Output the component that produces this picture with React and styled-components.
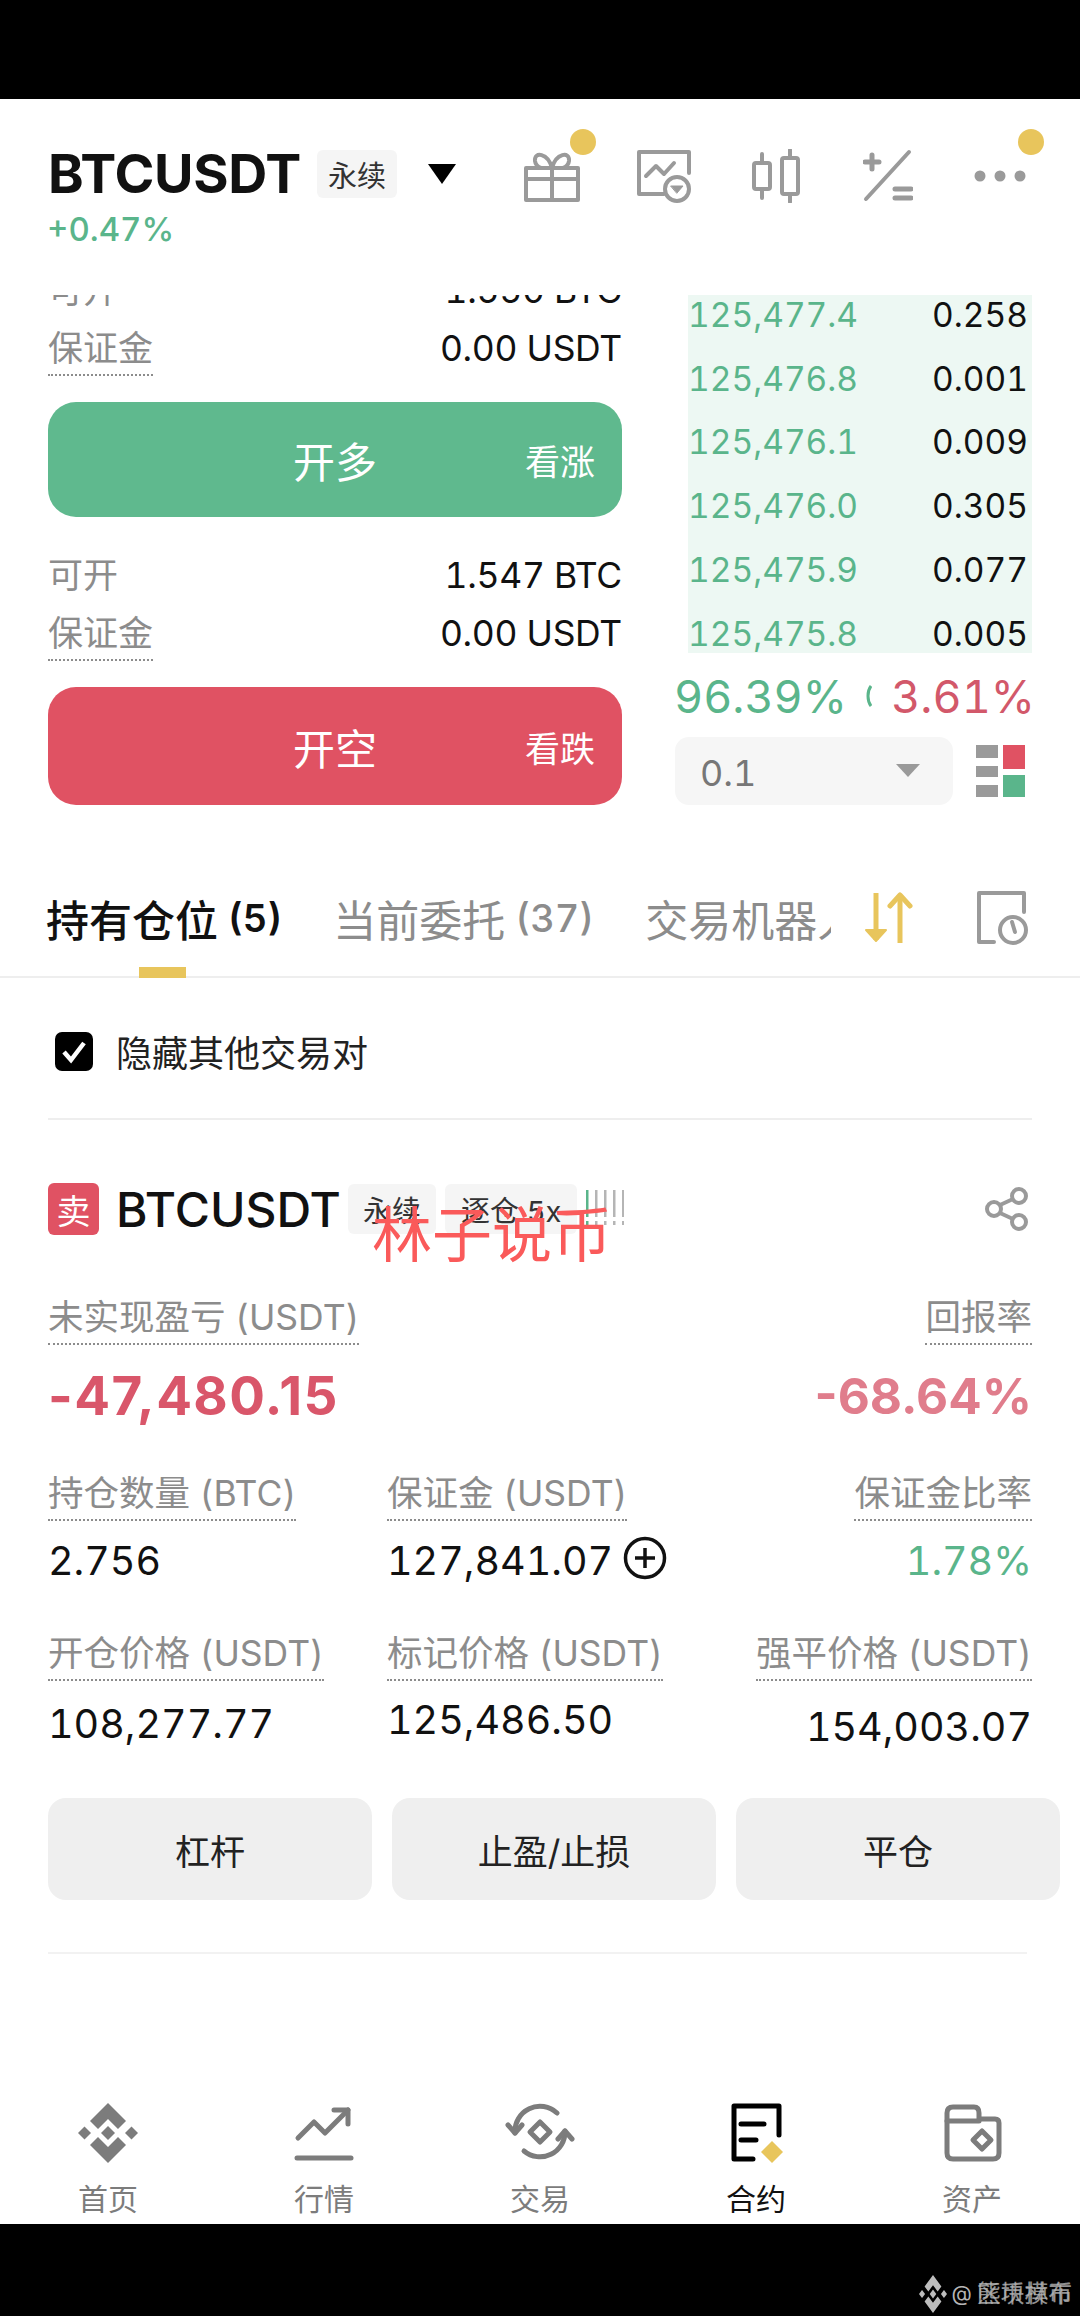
import React from "react";
import styled, { createGlobalStyle } from "styled-components";

const green = "#5ab58b";
const red = "#e05263";
const grey = "#8c8c8c";
const iconGrey = "#9a9a9a";
const navGrey = "#7c7c7c";
const yellow = "#e8c55c";

const GlobalStyle = createGlobalStyle`
  html, body {
    margin: 0;
    padding: 0;
    background: #000;
  }
  * {
    box-sizing: border-box;
  }
  body {
    font-family: Inter, "Noto Sans CJK SC", sans-serif;
    font-variant-numeric: tabular-nums;
    color: #111;
  }
`;

const Page = styled.div`
  width: 1080px;
  height: 2316px;
  display: flex;
  flex-direction: column;
  background: #000;
  overflow: hidden;
`;

const TopBar = styled.div`
  height: 99px;
  flex: none;
`;

const Screen = styled.div`
  height: 2125px;
  flex: none;
  background: #fff;
  display: flex;
  flex-direction: column;
`;

const Header = styled.div`
  height: 196px;
  flex: none;
  display: flex;
  justify-content: space-between;
  padding: 49px 24px 0 48px;
`;

const TitleRow = styled.div`
  display: flex;
  align-items: center;
  height: 52px;
`;

const Title = styled.div`
  font-size: 54px;
  font-weight: 700;
  letter-spacing: -0.3px;
  line-height: 52px;
`;

const Tag = styled.div`
  background: #f5f5f5;
  border-radius: 6px;
  height: ${(p) => p.$h || 48}px;
  padding: 0 ${(p) => p.$pad || 11}px;
  display: flex;
  align-items: center;
  font-size: 29px;
  color: #333;
  white-space: nowrap;
`;

const TitleTag = styled(Tag)`
  margin-left: 16px;
`;

const TitleCaret = styled.div`
  margin-left: 31px;
  width: 0;
  height: 0;
  border-left: 14px solid transparent;
  border-right: 14px solid transparent;
  border-top: 20px solid #000;
`;

const Change = styled.div`
  margin-top: 9px;
  font-size: 33px;
  font-weight: 500;
  line-height: 40px;
  margin-left: -1px;
  color: ${green};
`;

const HeaderIcons = styled.div`
  display: flex;
  margin-top: 2px;
`;

const IconCell = styled.div`
  position: relative;
  width: 112px;
  height: 52px;
  display: flex;
  align-items: center;
  justify-content: center;
`;

const Dot = styled.span`
  position: absolute;
  top: -21px;
  left: 74px;
  width: 26px;
  height: 26px;
  border-radius: 50%;
  background: ${yellow};
`;

const TradePanel = styled.div`
  height: 565px;
  flex: none;
  overflow: hidden;
  display: flex;
  justify-content: space-between;
  padding: 0 48px;
`;

const TradeLeft = styled.div`
  width: 574px;
  margin-top: -34px;
`;

const InfoRow = styled.div`
  height: 58px;
  display: flex;
  align-items: center;
  justify-content: space-between;
  font-size: 35.5px;
  letter-spacing: -0.3px;
`;

const InfoLabel = styled.span`
  color: ${grey};
  font-size: 35px;
  letter-spacing: 0;
  line-height: 52px;
  ${(p) => p.$dotted && `border-bottom: 2px dotted #8c8c8c; margin-top: 2px;`}
`;

const TradeButton = styled.div`
  position: relative;
  height: ${(p) => p.$h}px;
  margin: 25px 0 29px;
  border-radius: 28px;
  background: ${(p) => p.$bg};
  color: #fff;
  display: flex;
  align-items: center;
  justify-content: center;
  font-size: 42px;
`;

const ButtonHint = styled.span`
  position: absolute;
  right: 27px;
  font-size: 35px;
`;

const TradeRight = styled.div`
  width: 357px;
`;

const BookClip = styled.div`
  height: 358px;
  margin-left: 13px;
  background: #edf8f3;
  overflow: hidden;
`;

const BookInner = styled.div`
  margin-top: -12px;
`;

const BookRow = styled.div`
  height: 63.8px;
  display: flex;
  align-items: center;
  justify-content: space-between;
  padding-right: 4px;
  font-size: 33.5px;
`;

const BookPrice = styled.span`
  color: ${green};
  font-size: 33.5px;
`;

const RatioRow = styled.div`
  height: 60px;
  margin: 13px -3px 0 -1px;
  display: flex;
  align-items: center;
  justify-content: space-between;
  font-size: 45px;
`;

const RatioValue = styled.span`
  color: ${(p) => p.$color};
`;

const ControlRow = styled.div`
  margin-top: 11px;
  display: flex;
  align-items: center;
  justify-content: space-between;
  padding-right: 7px;
`;

const StepSelect = styled.div`
  width: 278px;
  height: 68px;
  border-radius: 14px;
  background: #f6f6f6;
  display: flex;
  align-items: center;
  justify-content: space-between;
  padding: 4px 33px 0 25px;
  font-size: 36px;
  color: #777;
`;

const SelectCaret = styled.span`
  width: 0;
  height: 0;
  margin-top: -6px;
  border-left: 12px solid transparent;
  border-right: 12px solid transparent;
  border-top: 13px solid #9a9a9a;
`;

const Tabs = styled.div`
  height: 118px;
  flex: none;
  display: flex;
  align-items: center;
  padding: 0 52px 0 46px;
  border-bottom: 2px solid #eeeeee;
`;

const Tab = styled.div`
  position: relative;
  height: 100%;
  flex: none;
  display: flex;
  align-items: center;
  margin-right: 51px;
  font-size: 43px;
  white-space: nowrap;
  color: ${(p) => (p.$active ? "#111" : grey)};
  font-weight: ${(p) => (p.$active ? 500 : 400)};

  ${(p) =>
    p.$active &&
    `&::after {
      content: "";
      position: absolute;
      left: 50%;
      bottom: -2px;
      width: 47px;
      height: 11px;
      margin-left: -25px;
      background: ${yellow};
    }`}
`;

const TabCount = styled.span`
  font-size: 38px;
  margin-left: 10px;
  font-weight: ${(p) => (p.$active ? 600 : 500)};
`;

const ClippedTab = styled(Tab)`
  width: 186px;
  margin-right: 33px;
  overflow: hidden;
`;

const TabIcons = styled.div`
  display: flex;
  flex: none;
  align-items: center;
  gap: 63px;
`;

const HideRow = styled.div`
  height: 142px;
  margin: 0 48px;
  flex: none;
  padding: 6px 0 0 7px;
  display: flex;
  align-items: center;
  gap: 23px;
  border-bottom: 2px solid #eeeeee;
  font-size: 36px;
  color: #222;
`;

const Position = styled.div`
  padding: 63px 48px 0;
  display: flex;
  flex-direction: column;
`;

const PositionHead = styled.div`
  position: relative;
  height: 52px;
  display: flex;
  align-items: center;
`;

const SideBadge = styled.div`
  width: 51px;
  height: 52px;
  border-radius: 6px;
  background: ${red};
  color: #fff;
  font-size: 34px;
  display: flex;
  align-items: center;
  justify-content: center;
`;

const PositionName = styled.div`
  margin-left: 17px;
  font-size: 48px;
  font-weight: 500;
`;

const HeadTags = styled.div`
  margin-left: 7px;
  display: flex;
  align-items: center;
  gap: 9px;
`;

const Share = styled.div`
  margin-left: auto;
  margin-right: 4px;
  display: flex;
`;

const Stamp = styled.div`
  position: absolute;
  left: 324px;
  top: 18px;
  font-size: 60px;
  line-height: 68px;
  color: #fa5a5a;
  white-space: nowrap;
`;

const Metrics = styled.div`
  margin-top: 60px;
  display: grid;
  grid-template-columns: 339px 1fr auto;
  row-gap: 45px;
`;

const Cell = styled.div`
  display: flex;
  flex-direction: column;
  align-items: ${(p) => (p.$right ? "flex-end" : "flex-start")};
  ${(p) => p.$col && `grid-column: ${p.$col};`}
`;

const MetricLabel = styled.span`
  font-size: 35.5px;
  line-height: 46px;
  padding-bottom: 2px;
  color: ${grey};
  border-bottom: 2px dotted #8c8c8c;
  white-space: nowrap;
`;

const BigValue = styled.div`
  margin-top: 21px;
  font-size: ${(p) => p.$size}px;
  line-height: 60px;
  font-weight: 700;
  font-variant-numeric: proportional-nums;
  letter-spacing: ${(p) => p.$spacing || 0}px;
  color: ${(p) => p.$color};
`;

const MetricValue = styled.div`
  margin-top: ${(p) => p.$top || 15}px;
  font-size: 39.5px;
  line-height: 50px;
  color: ${(p) => p.$color || "#111"};
  display: flex;
  align-items: center;
  gap: 10px;
`;

const PlusWrap = styled.span`
  display: flex;
  margin-top: -6px;
`;

const Actions = styled.div`
  margin-top: 46px;
  width: 1012px;
  flex: none;
  display: grid;
  grid-template-columns: repeat(3, 324px);
  gap: 20px;
`;

const ActionButton = styled.div`
  height: 102px;
  border-radius: 18px;
  background: #efefef;
  color: #222;
  font-size: 35px;
  display: flex;
  align-items: center;
  justify-content: center;
`;

const EndLine = styled.div`
  height: 2px;
  margin: 52px 5px 0 0;
  background: #f2f2f2;
`;

const Nav = styled.div`
  margin-top: auto;
  padding-bottom: 5px;
  display: grid;
  grid-template-columns: repeat(5, 216px);
`;

const NavItem = styled.div`
  display: flex;
  flex-direction: column;
  align-items: center;
  gap: 16px;
  font-size: 30px;
  line-height: 40px;
  color: ${(p) => (p.$active ? "#111" : navGrey)};
`;

const NavIconBox = styled.div`
  height: 60px;
  display: flex;
  justify-content: center;
`;

const BottomBar = styled.div`
  flex: 1;
  display: flex;
  align-items: flex-end;
  justify-content: flex-end;
  padding: 0 8px 3px 0;
  color: #b5b5b5;
`;

const Credit = styled.div`
  display: flex;
  align-items: center;
  gap: 5px;
  font-size: 24px;
  line-height: 38px;
`;

const CreditAt = styled.span`
  font-size: 21px;
`;

const CreditStack = styled.div`
  display: grid;
  letter-spacing: -0.2px;
  > span {
    grid-area: 1 / 1;
    opacity: 0.8;
  }
`;

const GiftIcon = () => (
  <svg width="56" height="54" viewBox="0 0 56 54" fill="none" stroke={iconGrey} strokeWidth="4" strokeLinejoin="round">
    <path d="M2 19H54V51H2Z" />
    <path d="M2 30H54M28 19V51" />
    <path d="M28 19C24 4 10 2 11 12C11.500 16 14 18 17 19M28 19C32 4 46 2 45 12C44.500 16 42 18 39 19" />
  </svg>
);

const ChartIcon = () => (
  <svg width="56" height="54" viewBox="0 0 56 54" fill="none" stroke={iconGrey} strokeWidth="4" strokeLinecap="round" strokeLinejoin="round">
    <path d="M28 45H3V3H53V24" />
    <path d="M10 27L20 17L28 25L38 14" />
    <circle cx="41" cy="40" r="12" />
    <path d="M35 37H47L41 44Z" fill={iconGrey} strokeWidth="1" />
  </svg>
);

const CandleIcon = () => (
  <svg width="48" height="54" viewBox="0 0 48 54" fill="none" stroke={iconGrey} strokeWidth="4" strokeLinecap="round" strokeLinejoin="round">
    <rect x="2" y="14" width="16" height="26" rx="2" />
    <path d="M10 5V14M10 40V49" />
    <rect x="30" y="9" width="16" height="36" rx="2" />
    <path d="M38 1V9M38 45V53" />
  </svg>
);

const PlusMinusIcon = () => (
  <svg width="50" height="54" viewBox="0 0 50 54" fill="none" stroke={iconGrey} strokeWidth="4" strokeLinecap="round">
    <path d="M2 13H16M9 6V20" strokeWidth="5" />
    <path d="M3 50L46 3" />
    <path d="M32 40H48M32 49H48" strokeWidth="5" />
  </svg>
);

const DotsIcon = () => (
  <svg width="52" height="12" viewBox="0 0 52 12" fill={iconGrey}>
    <circle cx="6" cy="6" r="5.500" />
    <circle cx="26" cy="6" r="5.500" />
    <circle cx="46" cy="6" r="5.500" />
  </svg>
);

const RatioArc = () => (
  <svg width="6" height="22" viewBox="0 0 6 22" fill="none" stroke={green} strokeWidth="3">
    <path d="M5 1C1 6 1 16 5 21" />
  </svg>
);

const DepthIcon = () => (
  <svg width="49" height="52" viewBox="0 0 49 52">
    <rect x="0" y="0" width="22" height="13" fill="#9a9a9a" />
    <rect x="0" y="21" width="22" height="11" fill="#9a9a9a" />
    <rect x="0" y="40" width="22" height="12" fill="#9a9a9a" />
    <rect x="27" y="0" width="22" height="24" fill={red} />
    <rect x="27" y="30" width="22" height="22" fill={green} />
  </svg>
);

const SortIcon = () => (
  <svg width="49" height="52" viewBox="0 0 49 52" fill="none" stroke={yellow} strokeWidth="5" strokeLinejoin="round">
    <path d="M12 1V48" />
    <path d="M2 38L12 49L22 38Z" fill={yellow} strokeWidth="2" />
    <path d="M36 51V4" />
    <path d="M26 14L36 3L46 14" strokeLinecap="round" />
  </svg>
);

const HistoryIcon = () => (
  <svg width="52" height="56" viewBox="0 0 52 56" fill="none" stroke={iconGrey} strokeWidth="4" strokeLinecap="round" strokeLinejoin="round">
    <path d="M18 52H3V3H48V22" />
    <circle cx="37" cy="40" r="13" />
    <path d="M36 32L39 42" />
  </svg>
);

const CheckBox = () => (
  <svg width="38" height="39" viewBox="0 0 38 39">
    <rect width="38" height="39" rx="7" fill="#000" />
    <path d="M9 20L16 28L29 11" fill="none" stroke="#fff" strokeWidth="4.500" />
  </svg>
);

const ShareIcon = () => (
  <svg width="43" height="44" viewBox="0 0 43 44" fill="none" stroke={iconGrey} strokeWidth="4">
    <circle cx="9" cy="22" r="7" />
    <circle cx="34" cy="9" r="7" />
    <circle cx="34" cy="35" r="7" />
    <path d="M15 18L28 12M15 26L28 32" />
  </svg>
);

const MarginBars = () => (
  <svg width="38" height="38" viewBox="0 0 38 38">
    {[0, 1, 2, 3, 4].map((i) => (
      <g key={i} fill={i === 0 ? green : "#b5b5b5"}>
        <rect x={i * 9} y="0" width="2.500" height="27" />
        <rect x={i * 9} y="31" width="2.500" height="4" />
      </g>
    ))}
  </svg>
);

const PlusCircle = () => (
  <svg width="44" height="44" viewBox="0 0 44 44" fill="none" stroke="#111" strokeWidth="3.500">
    <circle cx="22" cy="22" r="19.500" />
    <path d="M12 22H32M22 12V32" />
  </svg>
);

const BinanceMark = ({ width, height, fill }) => (
  <svg width={width} height={height} viewBox="0 0 60 60" fill={fill} preserveAspectRatio="none">
    <path d="M30 0L48 18L40 26L30 16L20 26L12 18Z" />
    <path d="M30 60L48 42L40 34L30 44L20 34L12 42Z" />
    <path d="M6.500 23.500L13 30L6.500 36.500L0 30Z" />
    <path d="M53.500 23.500L60 30L53.500 36.500L47 30Z" />
    <path d="M30 23L37 30L30 37L23 30Z" />
  </svg>
);

const MarketsIcon = () => (
  <svg width="60" height="60" viewBox="0 0 60 60" fill="none" stroke={navGrey} strokeWidth="5" strokeLinecap="round" strokeLinejoin="round">
    <path d="M4 35L20 19L31 30L54 7" />
    <path d="M40 7H54V21" />
    <path d="M3 55H57" />
  </svg>
);

const TradeIcon = () => (
  <svg width="70" height="60" viewBox="0 0 70 60" fill="none" stroke={navGrey} strokeWidth="5" strokeLinecap="round" strokeLinejoin="round">
    <path d="M10 30A25 25 0 0 1 52 10" />
    <path d="M3 22L10 30L17 22" />
    <path d="M60 28A25 25 0 0 1 19 48" />
    <path d="M53 36L60 28L67 36" />
    <path d="M35 19L45 29L35 39L25 29Z" />
  </svg>
);

const FuturesIcon = () => (
  <svg width="60" height="60" viewBox="0 0 60 60" fill="none" stroke="#000" strokeWidth="5" strokeLinecap="round" strokeLinejoin="round">
    <path d="M53 32V3H8V56H27" />
    <path d="M15 21H38M15 37H30" />
    <path d="M46 38L57 49L46 60L35 49Z" fill={yellow} stroke="none" />
  </svg>
);

const AssetsIcon = () => (
  <svg width="60" height="60" viewBox="0 0 60 60" fill="none" stroke={navGrey} strokeWidth="5" strokeLinecap="round" strokeLinejoin="round">
    <path d="M5 20V10Q5 4 11 4H32Q37 4 37 10V16H53Q57 16 57 20V50Q57 56 51 56H11Q5 56 5 50Z" />
    <path d="M5 18H37" />
    <path d="M40 28L49 37L40 46L31 37Z" />
  </svg>
);

const orderRows = [
  ["125,477.4", "0.258"],
  ["125,476.8", "0.001"],
  ["125,476.1", "0.009"],
  ["125,476.0", "0.305"],
  ["125,475.9", "0.077"],
  ["125,475.8", "0.005"],
];

const navItems = [
  { label: "首页", icon: <BinanceMark width={60} height={60} fill={navGrey} /> },
  { label: "行情", icon: <MarketsIcon /> },
  { label: "交易", icon: <TradeIcon /> },
  { label: "合约", icon: <FuturesIcon />, active: true },
  { label: "资产", icon: <AssetsIcon /> },
];

const App = () => {
  return (
    <>
      <GlobalStyle />
      <Page>
        <TopBar />
        <Screen>
          <Header>
            <div>
              <TitleRow>
                <Title>BTCUSDT</Title>
                <TitleTag>永续</TitleTag>
                <TitleCaret />
              </TitleRow>
              <Change>+0.47%</Change>
            </div>
            <HeaderIcons>
              <IconCell>
                <GiftIcon />
                <Dot />
              </IconCell>
              <IconCell>
                <ChartIcon />
              </IconCell>
              <IconCell>
                <CandleIcon />
              </IconCell>
              <IconCell>
                <PlusMinusIcon />
              </IconCell>
              <IconCell>
                <DotsIcon />
                <Dot />
              </IconCell>
            </HeaderIcons>
          </Header>

          <TradePanel>
            <TradeLeft>
              <InfoRow>
                <InfoLabel>可开</InfoLabel>
                <span>1.550 BTC</span>
              </InfoRow>
              <InfoRow>
                <InfoLabel $dotted>保证金</InfoLabel>
                <span>0.00 USDT</span>
              </InfoRow>
              <TradeButton $bg="#5fb98e" $h={115}>
                开多
                <ButtonHint>看涨</ButtonHint>
              </TradeButton>
              <InfoRow>
                <InfoLabel>可开</InfoLabel>
                <span>1.547 BTC</span>
              </InfoRow>
              <InfoRow>
                <InfoLabel $dotted>保证金</InfoLabel>
                <span>0.00 USDT</span>
              </InfoRow>
              <TradeButton $bg={red} $h={118}>
                开空
                <ButtonHint>看跌</ButtonHint>
              </TradeButton>
            </TradeLeft>

            <TradeRight>
              <BookClip>
                <BookInner>
                  {orderRows.map(([price, qty]) => (
                    <BookRow key={price}>
                      <BookPrice>{price}</BookPrice>
                      <span>{qty}</span>
                    </BookRow>
                  ))}
                </BookInner>
              </BookClip>
              <RatioRow>
                <RatioValue $color={green}>96.39%</RatioValue>
                <RatioArc />
                <RatioValue $color="#d2586a">3.61%</RatioValue>
              </RatioRow>
              <ControlRow>
                <StepSelect>
                  0.1
                  <SelectCaret />
                </StepSelect>
                <DepthIcon />
              </ControlRow>
            </TradeRight>
          </TradePanel>

          <Tabs>
            <Tab $active>
              持有仓位<TabCount $active>(5)</TabCount>
            </Tab>
            <Tab>
              当前委托<TabCount>(37)</TabCount>
            </Tab>
            <ClippedTab>交易机器人</ClippedTab>
            <TabIcons>
              <SortIcon />
              <HistoryIcon />
            </TabIcons>
          </Tabs>

          <HideRow>
            <CheckBox />
            隐藏其他交易对
          </HideRow>

          <Position>
            <PositionHead>
              <SideBadge>卖</SideBadge>
              <PositionName>BTCUSDT</PositionName>
              <HeadTags>
                <Tag $h={50} $pad={15}>永续</Tag>
                <Tag $h={50} $pad={16}>逐仓 5x</Tag>
                <MarginBars />
              </HeadTags>
              <Share>
                <ShareIcon />
              </Share>
              <Stamp>林子说币</Stamp>
            </PositionHead>

            <Metrics>
              <Cell>
                <MetricLabel>未实现盈亏 (USDT)</MetricLabel>
                <BigValue $color="#d9566a" $size={53} $spacing={1.4}>-47,480.15</BigValue>
              </Cell>
              <Cell $right $col={3}>
                <MetricLabel>回报率</MetricLabel>
                <BigValue $color="#e07d8c" $size={49.5}>-68.64%</BigValue>
              </Cell>

              <Cell>
                <MetricLabel>持仓数量 (BTC)</MetricLabel>
                <MetricValue>2.756</MetricValue>
              </Cell>
              <Cell>
                <MetricLabel>保证金 (USDT)</MetricLabel>
                <MetricValue>
                  127,841.07
                  <PlusWrap>
                    <PlusCircle />
                  </PlusWrap>
                </MetricValue>
              </Cell>
              <Cell $right>
                <MetricLabel>保证金比率</MetricLabel>
                <MetricValue $color={green}>1.78%</MetricValue>
              </Cell>

              <Cell>
                <MetricLabel>开仓价格 (USDT)</MetricLabel>
                <MetricValue $top={18}>108,277.77</MetricValue>
              </Cell>
              <Cell>
                <MetricLabel>标记价格 (USDT)</MetricLabel>
                <MetricValue $top={14}>125,486.50</MetricValue>
              </Cell>
              <Cell $right>
                <MetricLabel>强平价格 (USDT)</MetricLabel>
                <MetricValue $top={21}>154,003.07</MetricValue>
              </Cell>
            </Metrics>

            <Actions>
              <ActionButton>杠杆</ActionButton>
              <ActionButton>止盈/止损</ActionButton>
              <ActionButton>平仓</ActionButton>
            </Actions>

            <EndLine />
          </Position>

          <Nav>
            {navItems.map((item) => (
              <NavItem key={item.label} $active={item.active}>
                <NavIconBox>{item.icon}</NavIconBox>
                {item.label}
              </NavItem>
            ))}
          </Nav>
        </Screen>

        <BottomBar>
          <Credit>
            <BinanceMark width={28} height={38} fill="#bdbdbd" />
            <CreditAt>@</CreditAt>
            <CreditStack>
              <span>区块林布</span>
              <span>熊币摸币</span>
            </CreditStack>
          </Credit>
        </BottomBar>
      </Page>
    </>
  );
};

export default App;
